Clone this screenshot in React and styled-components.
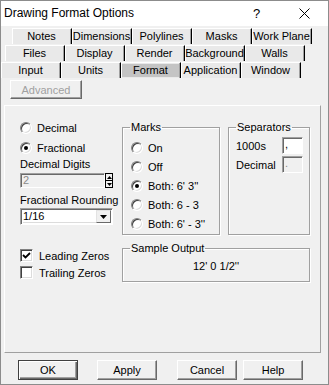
import React from 'react'
import styled, { createGlobalStyle } from 'styled-components'

const GlobalStyle = createGlobalStyle`
  html, body {
    margin: 0;
    padding: 0;
    background: #f0f0f0;
  }
  body {
    font-family: 'Liberation Sans', Arial, sans-serif;
    font-size: 11px;
    color: #000;
  }
`

const tabRows = [
  { offset: 11, tabs: ['Notes', 'Dimensions', 'Polylines', 'Masks', 'Work Plane'] },
  { offset: 4, tabs: ['Files', 'Display', 'Render', 'Background', 'Walls'] },
  { offset: 0, tabs: ['Input', 'Units', 'Format', 'Application', 'Window'] },
]

const marks = ['On', 'Off', "Both: 6' 3''", 'Both: 6 - 3', "Both: 6' - 3''"]

function App() {
  return (
    <>
      <GlobalStyle />
      <Window>
        <TitleBar>
          <TitleText>Drawing Format Options</TitleText>
          <HelpGlyph>?</HelpGlyph>
          <CloseGlyph>
            <svg width="11" height="11" viewBox="0 0 11 11">
              <path d="M0.5 0.5 L10.5 10.5 M10.5 0.5 L0.5 10.5" stroke="#000" strokeWidth="1" />
            </svg>
          </CloseGlyph>
        </TitleBar>

        <TabStrip>
          {tabRows.map((row) => (
            <TabRow key={row.tabs[0]} $offset={row.offset}>
              {row.tabs.map((t) => (
                <Tab key={t}>
                  <TabLabel $active={t === 'Format'}>{t}</TabLabel>
                </Tab>
              ))}
            </TabRow>
          ))}
        </TabStrip>

        <AdvancedButton disabled>Advanced</AdvancedButton>

        <Panel>
          <TopRow>
            <LeftCol>
              <RadioRow $h={20}>
                <Radio />
                <span>Decimal</span>
              </RadioRow>
              <RadioRow $h={20}>
                <Radio $checked />
                <span>Fractional</span>
              </RadioRow>
              <FieldLabel>Decimal Digits</FieldLabel>
              <SpinWrap>
                <EditBox $disabled $w={85}>2</EditBox>
                <SpinButtons>
                  <SpinButton>
                    <svg width="5" height="3" viewBox="0 0 5 3">
                      <path d="M2.5 0 L5 3 L0 3 Z" fill="#000" />
                    </svg>
                  </SpinButton>
                  <SpinButton>
                    <svg width="5" height="3" viewBox="0 0 5 3">
                      <path d="M0 0 L5 0 L2.5 3 Z" fill="#000" />
                    </svg>
                  </SpinButton>
                </SpinButtons>
              </SpinWrap>
              <FieldLabel $mt={6}>Fractional Rounding</FieldLabel>
              <Combo>
                <ComboText>1/16</ComboText>
                <ComboButton>
                  <svg width="7" height="4" viewBox="0 0 7 4">
                    <path d="M0 0 L7 0 L3.5 4 Z" fill="#000" />
                  </svg>
                </ComboButton>
              </Combo>
            </LeftCol>

            <Group $ml={9} $w={98} $h={114} $mt={3}>
              <Legend>Marks</Legend>
              <GroupBody $pt={5} $pl={8}>
                {marks.map((m) => (
                  <RadioRow key={m} $h={19}>
                    <Radio $checked={m === "Both: 6' 3''"} />
                    <span>{m}</span>
                  </RadioRow>
                ))}
              </GroupBody>
            </Group>

            <Group $ml={8} $w={82} $h={114} $mt={3}>
              <Legend>Separators</Legend>
              <GroupBody $pt={4} $pl={7}>
                <SepRow>
                  <SepLabel>1000s</SepLabel>
                  <EditBox $w={21} $h={17}>,</EditBox>
                </SepRow>
                <SepRow $mt={2}>
                  <SepLabel>Decimal</SepLabel>
                  <EditBox $disabled $w={21} $h={17}>.</EditBox>
                </SepRow>
              </GroupBody>
            </Group>
          </TopRow>

          <BottomRow>
            <CheckCol>
              <CheckRow>
                <CheckBox>
                  <svg width="9" height="9" viewBox="0 0 9 9">
                    <path d="M1 4 L3.5 6.5 L8 2" stroke="#000" strokeWidth="1.8" fill="none" />
                  </svg>
                </CheckBox>
                <span>Leading Zeros</span>
              </CheckRow>
              <CheckRow>
                <CheckBox />
                <span>Trailing Zeros</span>
              </CheckRow>
            </CheckCol>
            <Group $w={188} $h={40} $mt={7}>
              <Legend>Sample Output</Legend>
              <SampleText>12' 0 1/2''</SampleText>
            </Group>
          </BottomRow>
        </Panel>

        <ButtonRow>
          <DialogButton $default $ml={17}>OK</DialogButton>
          <DialogButton $ml={19}>Apply</DialogButton>
          <DialogButton $ml={20}>Cancel</DialogButton>
          <DialogButton $ml={6}>Help</DialogButton>
        </ButtonRow>
      </Window>
    </>
  )
}

const Window = styled.div`
  width: 329px;
  height: 385px;
  box-sizing: border-box;
  border: 1px solid #8c8c8c;
  background: #f0f0f0;
  display: flex;
  flex-direction: column;
  overflow: hidden;
`

// title bar
const TitleBar = styled.div`
  height: 25px;
  background: #fff;
  display: flex;
  align-items: center;
  padding-left: 3px;
  font-size: 12px;
`
const TitleText = styled.span`
  flex: 1;
  margin-top: -1px;
`
const HelpGlyph = styled.span`
  width: 10px;
  font-size: 13px;
  margin-right: 36px;
`
const CloseGlyph = styled.span`
  display: flex;
  margin-right: 18px;
`

// tabs
const TabStrip = styled.div`
  display: flex;
  flex-direction: column;
  padding-top: 1px;
`
const TabRow = styled.div`
  display: flex;
  height: 17px;
  padding-left: ${(p) => p.$offset}px;
`
const Tab = styled.div`
  width: 60px;
  height: 16px;
  box-sizing: border-box;
  margin-top: 1px;
  border-top: 1px solid #fff;
  border-left: 1px solid #fff;
  border-right: 1px solid #000;
  box-shadow: inset -1px 0 #a0a0a0;
  background: #e9e9e9;
  display: flex;
  justify-content: center;
  align-items: center;
  padding: 0 2px 0 1px;
`
const TabLabel = styled.span`
  white-space: nowrap;
  line-height: 13px;
  padding: 0 ${(p) => (p.$active ? '11px' : '0')};
  background: ${(p) => (p.$active ? '#c4c4c4' : 'transparent')};
`

const AdvancedButton = styled.button`
  width: 72px;
  height: 19px;
  margin: 2px 0 0 9px;
  padding: 0;
  font: inherit;
  color: #a0a0a0;
  background: #f0f0f0;
  border: 1px solid;
  border-color: #fff #696969 #696969 #fff;
  box-shadow: inset -1px -1px #a0a0a0;
`

// panel
const Panel = styled.div`
  width: 317px;
  height: 248px;
  margin: 6px 0 0 3px;
  box-sizing: border-box;
  border: 1px solid;
  border-color: #fff #a0a0a0 #a0a0a0 #fff;
  padding: 12px 0 0 15px;
  display: flex;
  flex-direction: column;
`
const TopRow = styled.div`
  display: flex;
  align-items: flex-start;
`
const LeftCol = styled.div`
  width: 93px;
  display: flex;
  flex-direction: column;
`
const RadioRow = styled.div`
  display: flex;
  align-items: center;
  gap: 5px;
  height: ${(p) => p.$h}px;
  white-space: nowrap;
`
const Radio = styled.span`
  width: 12px;
  height: 12px;
  box-sizing: border-box;
  border-radius: 50%;
  background: #fff;
  border: 1px solid;
  border-color: #808080 #fff #fff #808080;
  box-shadow: inset 1px 1px 0 #404040, inset -1px -1px 0 #dcdcdc;
  display: flex;
  align-items: center;
  justify-content: center;
  flex: none;
  &::after {
    content: '';
    width: 4px;
    height: 4px;
    border-radius: 50%;
    background: ${(p) => (p.$checked ? '#000' : 'transparent')};
  }
`
const FieldLabel = styled.div`
  height: 12px;
  line-height: 12px;
  margin-top: ${(p) => p.$mt || 0}px;
  white-space: nowrap;
`
const SpinWrap = styled.div`
  display: flex;
  margin-top: 3px;
  height: 15px;
`
const EditBox = styled.div`
  width: ${(p) => p.$w}px;
  height: ${(p) => p.$h || 15}px;
  box-sizing: border-box;
  border: 1px solid;
  border-color: #a0a0a0 #fff #fff #a0a0a0;
  box-shadow: inset 1px 1px 0 #696969;
  background: ${(p) => (p.$disabled ? '#f0f0f0' : '#fff')};
  color: ${(p) => (p.$disabled ? '#8a8a8a' : '#000')};
  padding-left: 2px;
  line-height: 12px;
`
const SpinButtons = styled.div`
  display: flex;
  flex-direction: column;
  width: 8px;
`
const SpinButton = styled.div`
  flex: 1;
  box-sizing: border-box;
  border: 1px solid #000;
  background: #f0f0f0;
  display: flex;
  align-items: center;
  justify-content: center;
  & + & {
    border-top: none;
  }
`
const Combo = styled.div`
  margin-top: 2px;
  width: 93px;
  height: 17px;
  box-sizing: border-box;
  border: 1px solid;
  border-color: #a0a0a0 #fff #fff #a0a0a0;
  box-shadow: inset 1px 1px 0 #696969;
  background: #fff;
  display: flex;
  align-items: stretch;
  padding: 1px 1px 1px 2px;
`
const ComboText = styled.div`
  flex: 1;
  line-height: 13px;
  border-bottom: 1px solid #dcdcdc;
`
const ComboButton = styled.div`
  width: 15px;
  box-sizing: border-box;
  border: 1px solid;
  border-color: #e3e3e3 #696969 #696969 #e3e3e3;
  background: #f0f0f0;
  display: flex;
  align-items: center;
  justify-content: center;
`

// group boxes
const Group = styled.fieldset`
  margin: ${(p) => p.$mt || 0}px 0 0 ${(p) => p.$ml || 0}px;
  padding: 0;
  width: ${(p) => p.$w}px;
  height: ${(p) => p.$h}px;
  box-sizing: border-box;
  border: 1px solid #a0a0a0;
  box-shadow: inset 1px 1px 0 #fff, 1px 1px 0 #fff;
  min-inline-size: 0;
`
const Legend = styled.legend`
  margin-left: 7px;
  padding: 0 1px;
  line-height: 12px;
  font-size: 11px;
`
const GroupBody = styled.div`
  display: flex;
  flex-direction: column;
  padding: ${(p) => p.$pt}px 0 0 ${(p) => p.$pl}px;
`
const SepRow = styled.div`
  display: flex;
  align-items: center;
  margin-top: ${(p) => p.$mt || 0}px;
`
const SepLabel = styled.span`
  width: 46px;
`

const BottomRow = styled.div`
  display: flex;
  align-items: flex-start;
`
const CheckCol = styled.div`
  width: 102px;
  padding-top: 12px;
  display: flex;
  flex-direction: column;
`
const CheckRow = styled.div`
  height: 17px;
  display: flex;
  align-items: center;
  gap: 6px;
  white-space: nowrap;
`
const CheckBox = styled.span`
  width: 13px;
  height: 13px;
  box-sizing: border-box;
  background: #fff;
  border: 1px solid;
  border-color: #808080 #fff #fff #808080;
  box-shadow: inset 1px 1px 0 #404040, inset -1px -1px 0 #dcdcdc;
  display: flex;
  align-items: center;
  justify-content: center;
  flex: none;
`
const SampleText = styled.div`
  text-align: center;
  padding-top: 6px;
  line-height: 12px;
`

// dialog buttons
const ButtonRow = styled.div`
  display: flex;
  margin-top: 7px;
`
const DialogButton = styled.button`
  width: 60px;
  height: 20px;
  margin-left: ${(p) => p.$ml}px;
  padding: 0;
  font: inherit;
  color: #000;
  background: #f0f0f0;
  border: 1px solid;
  border-color: ${(p) => (p.$default ? '#404040' : '#fff #696969 #696969 #fff')};
  box-shadow: ${(p) =>
    p.$default
      ? 'inset 1px 1px 0 #fff, inset -1px -1px 0 #696969, inset -2px -2px 0 #a0a0a0'
      : 'inset -1px -1px 0 #a0a0a0'};
`

export default App
